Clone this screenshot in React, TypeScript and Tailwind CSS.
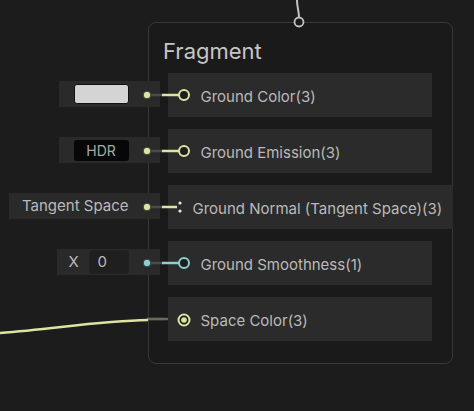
import React from "react";

const YELLOW = "#dde3a2";
const TEAL = "#8ad0d2";

type Port = "circle" | "dots" | "linked";

function Connector({ color, port, dot }: { color: string; port: Port; dot: boolean }) {
  // svg starts 25px left of the row (x=143 on the canvas)
  return (
    <svg className="absolute left-[-25px] top-0 h-[44px] w-[50px] overflow-visible" viewBox="0 0 50 44">
      <line x1="6" y1="22" x2="20" y2="22" stroke="#4a4a48" strokeWidth="2.5" />
      {port !== "linked" && <line x1="19" y1="22" x2={port === "dots" ? 34 : 36} y2="22" stroke={color} strokeWidth="2.5" />}
      {dot && <circle cx="4" cy="22" r="3.8" fill={color} stroke="#3a3a36" strokeWidth="1" />}
      {port === "circle" && <circle cx="41" cy="22" r="5" fill="#1e1e1e" stroke={color} strokeWidth="2" />}
      {port === "dots" && (
        <>
          <circle cx="37" cy="18" r="1.6" fill="#e6e6e6" />
          <circle cx="37" cy="26" r="1.6" fill="#e6e6e6" />
        </>
      )}
      {port === "linked" && (
        <>
          <line x1="4" y1="22" x2="25" y2="22" stroke="#6a6a5c" strokeWidth="2.5" />
          <circle cx="41" cy="23" r="5.5" fill="#1e1e1e" stroke={color} strokeWidth="2" />
          <circle cx="41" cy="23" r="2.8" fill={color} />
        </>
      )}
    </svg>
  );
}

function Row({
  label,
  color = YELLOW,
  port = "circle",
  wide = false,
  chip,
}: {
  label: string;
  color?: string;
  port?: Port;
  wide?: boolean;
  chip?: React.ReactNode;
}) {
  return (
    <div
      className={`relative flex h-[44px] items-center bg-[#2b2b2b] ${wide ? "w-[285px] pl-[25px]" : "w-[264px] pl-[33px]"}`}
    >
      {chip && (
        <div className="absolute right-full top-[8px] mr-[8px] flex h-[26px] items-center whitespace-nowrap bg-[#2a2a2a] pr-[31px]">
          {chip}
        </div>
      )}
      <Connector color={color} port={port} dot={!!chip} />
      <span className="whitespace-nowrap pt-[3px] text-[15px] leading-[20px] text-[#bababa]">{label}</span>
    </div>
  );
}

export default function App() {
  return (
    <div
      className="relative h-[411px] w-[474px] overflow-hidden bg-[#1c1c1c]"
      style={{ fontFamily: "Inter, 'Noto Sans', sans-serif" }}
    >
      <div className="absolute left-[148px] top-[22px] h-[342px] w-[305px] rounded-[8px] border-[1.5px] border-[#383838] bg-[#1a1a1a]">
        <div className="ml-[14px] mt-[14px] h-[28px] text-[22px] leading-[28px] text-[#c6c6c6]">Fragment</div>
        <div className="ml-[18.5px] mt-[8px] flex flex-col gap-[12px]">
          <Row
            label="Ground Color(3)"
            chip={
              <div className="ml-[15px] h-[20px] w-[55px] rounded-[3px] border border-[#111] bg-[#d4d4d4]" />
            }
          />
          <Row
            label="Ground Emission(3)"
            chip={
              <div className="ml-[15px] flex h-[21px] w-[55px] items-center justify-center rounded-[3px] bg-[#070707] text-[14px] text-[#a9a9a9]">
                HDR
              </div>
            }
          />
          <Row
            label="Ground Normal (Tangent Space)(3)"
            port="dots"
            wide
            chip={<span className="ml-[13px] text-[15px] text-[#bababa]">Tangent Space</span>}
          />
          <Row
            label="Ground Smoothness(1)"
            color={TEAL}
            chip={
              <div className="flex items-center">
                <span className="ml-[12px] w-[20px] text-[15px] text-[#bababa]">X</span>
                <div className="flex h-[24px] w-[40px] items-center rounded-[3px] border border-[#222] bg-[#1f1f1f] pl-[8px] text-[15px] text-[#bababa]">
                  0
                </div>
              </div>
            }
          />
          <Row label="Space Color(3)" port="linked" />
        </div>
      </div>
      <svg className="pointer-events-none absolute inset-0" width="474" height="411" viewBox="0 0 474 411">
        <path d="M297 0 C297 8 299 10 299 18" stroke="#c2c2c2" strokeWidth="2" fill="none" />
        <circle cx="299" cy="22" r="4.5" fill="#1a1a1a" stroke="#c2c2c2" strokeWidth="1.8" />
        <path d="M0 333 C60 328 100 321 148 320" stroke={YELLOW} strokeWidth="2.5" fill="none" />
      </svg>
    </div>
  );
}
